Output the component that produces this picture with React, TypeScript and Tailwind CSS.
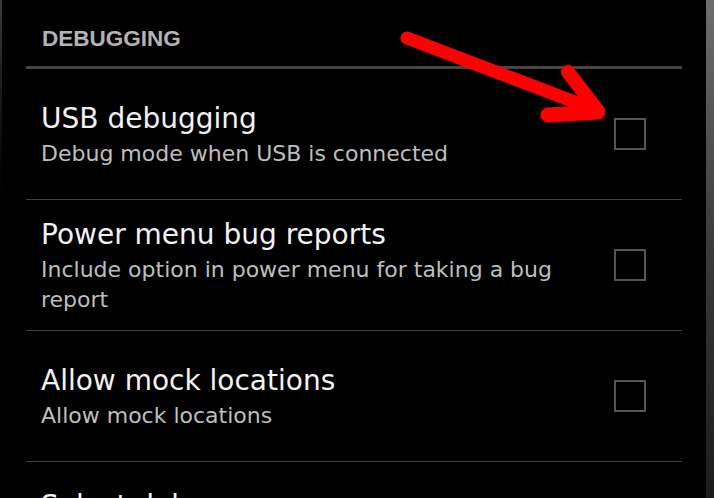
import React from 'react'

type Pref = {
  title: string
  summary: string
  checkbox?: boolean
}

const prefs: Pref[] = [
  { title: 'USB debugging', summary: 'Debug mode when USB is connected', checkbox: true },
  { title: 'Power menu bug reports', summary: 'Include option in power menu for taking a bug report', checkbox: true },
  { title: 'Allow mock locations', summary: 'Allow mock locations', checkbox: true },
]

// Unchecked box in the old Holo dark style
function CheckBox() {
  return <div className="w-[32px] h-[32px] shrink-0 border-2 border-[#565656]" />
}

function PrefRow({ pref }: { pref: Pref }) {
  return (
    <div className="h-[131px] flex items-center pl-[15px] pr-[36px] border-b border-[#414141]">
      <div className="flex-1 min-w-0 pr-[40px]">
        <div className="text-[28px] leading-[40px] text-[#f2f2f2] whitespace-nowrap">{pref.title}</div>
        <div className="text-[22px] leading-[30px] text-[#bebebe]">{pref.summary}</div>
      </div>
      {pref.checkbox && <CheckBox />}
    </div>
  )
}

// Hand-drawn red arrow pointing at the USB debugging checkbox
function Arrow() {
  return (
    <svg className="absolute inset-0 pointer-events-none" width={714} height={498} viewBox="0 0 714 498">
      <g stroke="#ff0000" strokeLinecap="round" strokeLinejoin="round" fill="none">
        <path d="M407 38 L596 110" strokeWidth={13} />
        <path d="M568 72 L598 111" strokeWidth={14} />
        <path d="M548 115 L598 112" strokeWidth={15} />
      </g>
    </svg>
  )
}

export default function App() {
  return (
    <div className="relative w-[714px] h-[498px] overflow-hidden bg-black flex">
      {/* left bezel edge */}
      <div className="w-[2px] shrink-0 bg-linear-to-b from-[#3c3c3c] to-black to-50%" />

      <div className="flex-1 pl-[24px] pr-[24px] font-['DejaVu_Sans',sans-serif]">
        <div className="w-[656px]">
          <div className="pt-[25px] pb-[13px] pl-[16px] text-[22.5px] leading-[28px] font-bold text-[#b3b3b3] font-['Liberation_Sans',Arial,sans-serif]">
            DEBUGGING
          </div>
          <div className="h-[3px] bg-[#464646]" />

          {prefs.map((p) => (
            <PrefRow key={p.title} pref={p} />
          ))}

          <div className="pt-[24px] pl-[15px]">
            <div className="text-[28px] leading-[40px] text-[#f2f2f2]">Select debug app</div>
            <div className="text-[22px] leading-[30px] text-[#bebebe]">No debug application set</div>
          </div>
        </div>
      </div>

      {/* right bezel edge */}
      <div className="w-[8px] shrink-0 bg-linear-to-b from-[#6e6e6e] via-[#3a3a3a] to-[#1c1c1c]" />

      <Arrow />
    </div>
  )
}
